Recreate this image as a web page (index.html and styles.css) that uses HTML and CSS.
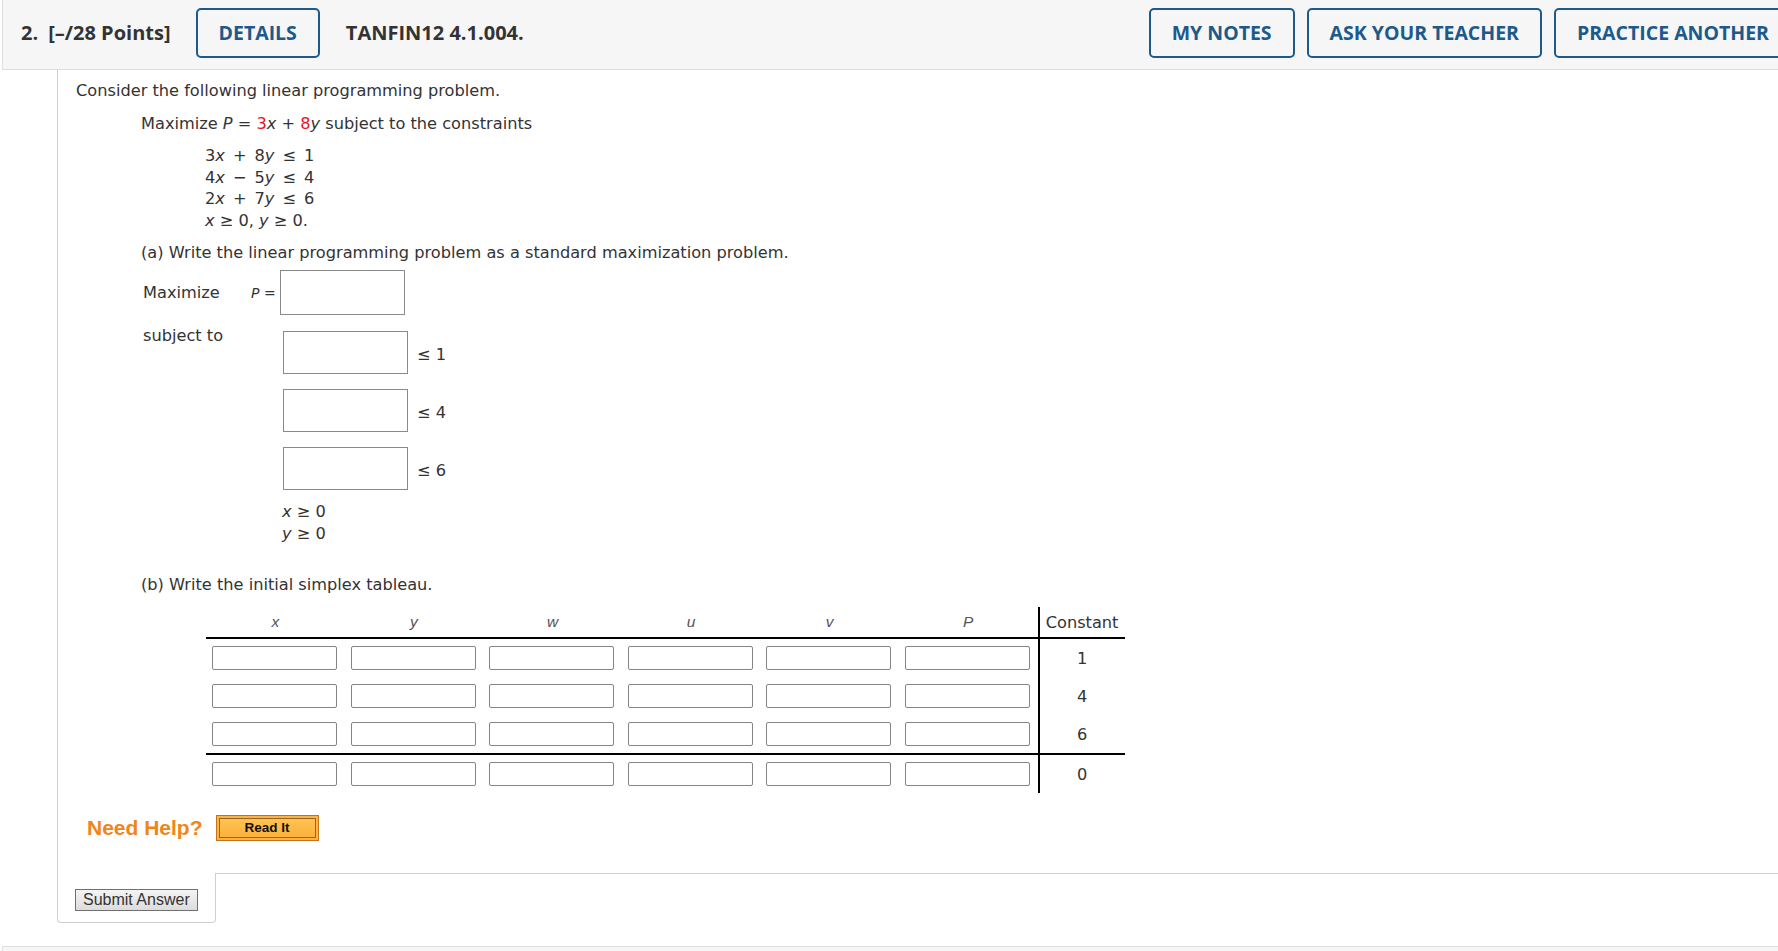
FILE: index.html
```html
<!DOCTYPE html>
<html lang="en">
<head>
    <meta charset="UTF-8">
    <title>Question 2</title>
    <link rel="stylesheet" href="styles.css">
</head>
<body>
    <!-- Question header bar -->
    <div class="q-header">
        <span class="q-num">2.</span>
        <span class="q-points">[&ndash;/28 Points]</span>
        <button class="hdr-btn">DETAILS</button>
        <span class="q-title">TANFIN12 4.1.004.</span>
        <div class="hdr-right">
            <button class="hdr-btn">MY NOTES</button>
            <button class="hdr-btn">ASK YOUR TEACHER</button>
            <button class="hdr-btn">PRACTICE ANOTHER</button>
        </div>
    </div>

    <div class="question">
        <div class="q-body">
            <p class="intro">Consider the following linear programming problem.</p>
            <div class="indent">
                <p class="objective">Maximize <i>P</i> = <span class="red">3</span><i>x</i> + <span class="red">8</span><i>y</i> subject to the constraints</p>
                <table class="constraints">
                    <tr><td>3<i>x</i></td><td>+</td><td>8<i>y</i></td><td>&le;</td><td>1</td></tr>
                    <tr><td>4<i>x</i></td><td>&minus;</td><td>5<i>y</i></td><td>&le;</td><td>4</td></tr>
                    <tr><td>2<i>x</i></td><td>+</td><td>7<i>y</i></td><td>&le;</td><td>6</td></tr>
                    <tr><td colspan="5"><i>x</i> &ge; 0, <i>y</i> &ge; 0.</td></tr>
                </table>

                <p class="part">(a) Write the linear programming problem as a standard maximization problem.</p>

                <div class="std-max">
                    <span class="std-label">Maximize</span>
                    <span class="p-eq"><i>P</i> =</span>
                    <input type="text" class="big-input">
                </div>
                <div class="std-sub">
                    <span class="std-label sub-label">subject to</span>
                    <div class="std-rows">
                        <div class="std-row"><input type="text" class="big-input"><span class="rhs">&le; 1</span></div>
                        <div class="std-row"><input type="text" class="big-input"><span class="rhs">&le; 4</span></div>
                        <div class="std-row"><input type="text" class="big-input"><span class="rhs">&le; 6</span></div>
                        <div class="nonneg">
                            <div><i>x</i> &ge; 0</div>
                            <div><i>y</i> &ge; 0</div>
                        </div>
                    </div>
                </div>

                <p class="part part-b">(b) Write the initial simplex tableau.</p>

                <table class="tableau">
                    <thead>
                        <tr>
                            <th class="var">x</th>
                            <th class="var">y</th>
                            <th class="var">w</th>
                            <th class="var">u</th>
                            <th class="var">v</th>
                            <th class="var">P</th>
                            <th class="const">Constant</th>
                        </tr>
                    </thead>
                    <tbody>
                        <tr>
                            <td><input type="text"></td><td><input type="text"></td><td><input type="text"></td>
                            <td><input type="text"></td><td><input type="text"></td><td><input type="text"></td>
                            <td class="const">1</td>
                        </tr>
                        <tr>
                            <td><input type="text"></td><td><input type="text"></td><td><input type="text"></td>
                            <td><input type="text"></td><td><input type="text"></td><td><input type="text"></td>
                            <td class="const">4</td>
                        </tr>
                        <tr class="last-constraint">
                            <td><input type="text"></td><td><input type="text"></td><td><input type="text"></td>
                            <td><input type="text"></td><td><input type="text"></td><td><input type="text"></td>
                            <td class="const">6</td>
                        </tr>
                        <tr>
                            <td><input type="text"></td><td><input type="text"></td><td><input type="text"></td>
                            <td><input type="text"></td><td><input type="text"></td><td><input type="text"></td>
                            <td class="const">0</td>
                        </tr>
                    </tbody>
                </table>
            </div>

            <!-- Help -->
            <div class="need-help">
                <span class="help-text">Need Help?</span>
                <button class="read-it"><span>Read It</span></button>
            </div>
        </div>

        <div class="q-foot">
            <div class="submit-tab">
                <button class="submit-btn">Submit Answer</button>
            </div>
            <div class="foot-line"></div>
        </div>
    </div>

    <!-- next question header (cut off) -->
    <div class="q-header next"></div>
</body>
</html>
```

FILE: styles.css
```css
body {
    margin: 0;
    background: #fff;
    color: #333;
    font-family: 'DejaVu Sans', Verdana, sans-serif;
    font-size: 16.2px;
    overflow: hidden;
}

/* header bar */
.q-header {
    display: flex;
    align-items: center;
    box-sizing: border-box;
    height: 70px;
    width: calc(100vw + 12px);
    margin-left: 2px;
    padding: 0 0 4px 18px;
    background: #f6f6f6;
    border-left: 1px solid #e0e0e0;
    border-bottom: 1px solid #dcdcdc;
    font-family: 'Open Sans', sans-serif;
    font-size: 20px;
    font-weight: 700;
    white-space: nowrap;
}

.q-header.next {
    margin-top: 23px;
    border-top: 1px solid #dcdcdc;
    border-bottom: none;
}

.q-points {
    margin-left: 10px;
}

.q-title {
    margin-left: 26px;
}

.hdr-btn {
    height: 50px;
    padding: 0 21px;
    margin-left: 25px;
    background: transparent;
    border: 2px solid #1d5a8c;
    border-radius: 5px;
    color: #1d5a8c;
    font-family: 'Open Sans', sans-serif;
    font-size: 19.5px;
    font-weight: 700;
}

.hdr-right {
    margin-left: auto;
    display: flex;
    gap: 12px;
}

.hdr-right .hdr-btn {
    margin-left: 0;
}

/* question body */
.question {
    margin-left: 57px;
}

.q-body {
    border-left: 1px solid #cfcfcf;
    padding: 11px 0 32px 18px;
}

p {
    margin: 0;
    line-height: 20px;
}

.indent {
    margin-left: 65px;
}

.objective {
    margin-top: 13px;
}

.red {
    color: #e8141c;
}

.constraints {
    margin: 11px 0 0 62px;
    border-collapse: collapse;
}

.constraints td {
    padding: 0 8px 0 0;
    height: 21.5px;
    line-height: 21.5px;
}

.constraints td:first-child {
    padding-left: 2px;
}

.constraints td:last-child {
    padding-right: 0;
}

.part {
    margin-top: 12px;
}

/* standard form */
.std-max {
    display: flex;
    align-items: center;
    margin: 7px 0 0 2px;
}

.std-label {
    width: 108px;
}

.p-eq {
    width: 29px;
    font-size: 14px;
}

.big-input {
    box-sizing: border-box;
    width: 125px;
    height: 45px;
    margin: 0;
    border: 1px solid #8a8a8a;
    background: #fff;
}

.std-sub {
    display: flex;
    margin: 11px 0 0 2px;
}

.sub-label {
    width: 140px;
    line-height: 20px;
}

.std-rows {
    display: flex;
    flex-direction: column;
    gap: 15px;
    margin-top: 5px;
}

.std-row {
    display: flex;
    align-items: center;
}

.std-row .big-input {
    height: 43px;
}

.rhs {
    margin-left: 9px;
    padding-top: 4px;
}

.nonneg {
    margin: -4px 0 0 -1px;
    line-height: 22px;
}

.part-b {
    margin-top: 30px;
}

/* simplex tableau */
.tableau {
    margin: 12px 0 0 65px;
    border-collapse: collapse;
}

.tableau th {
    height: 30px;
    padding: 0;
    border-bottom: 2px solid #000;
    font-weight: normal;
}

.tableau th.var {
    width: 138.6px;
    color: #555;
    font-family: 'Liberation Sans', Arial, sans-serif;
    font-style: italic;
    font-size: 15.5px;
}

.tableau .const {
    width: 73px;
    border-left: 2px solid #000;
    text-align: center;
}

.tableau th.const {
    padding: 0 6px;
}

.tableau td {
    height: 24px;
    padding: 7px 6px;
}

.tableau .last-constraint td {
    border-bottom: 2px solid #000;
}

.tableau input {
    box-sizing: border-box;
    display: block;
    width: 125px;
    height: 24px;
    margin: 0;
    border: 1px solid #858585;
    border-radius: 2px;
    background: #fff;
}

/* help row */
.need-help {
    display: flex;
    align-items: center;
    margin: 22px 0 0 11px;
}

.help-text {
    color: #f08519;
    font-family: 'Liberation Sans', Arial, sans-serif;
    font-size: 21px;
    font-weight: bold;
}

.read-it {
    margin-left: 13px;
    width: 103px;
    height: 26px;
    padding: 2px;
    background: #fbb443;
    border: 1px solid #c9721c;
    cursor: pointer;
}

.read-it span {
    display: block;
    height: 100%;
    box-sizing: border-box;
    border: 1px solid #9a6420;
    background: linear-gradient(#ffc352, #fbb13c);
    color: #111;
    font-family: 'Liberation Sans', Arial, sans-serif;
    font-size: 13.5px;
    font-weight: bold;
    line-height: 18px;
}

/* submit tab */
.q-foot {
    display: flex;
}

.submit-tab {
    box-sizing: border-box;
    width: 159px;
    height: 50px;
    padding: 16px 0 0 17px;
    border: 1px solid #cfcfcf;
    border-top: none;
    border-radius: 0 0 4px 4px;
}

.foot-line {
    flex: 1;
    border-top: 1px solid #cfcfcf;
}

.submit-btn {
    height: 22px;
    padding: 0 7px;
    background: linear-gradient(#f4f4f4, #dcdcdc);
    border: 1px solid #707070;
    color: #333;
    font-family: 'Liberation Sans', Arial, sans-serif;
    font-size: 16px;
    line-height: 18px;
}
```
